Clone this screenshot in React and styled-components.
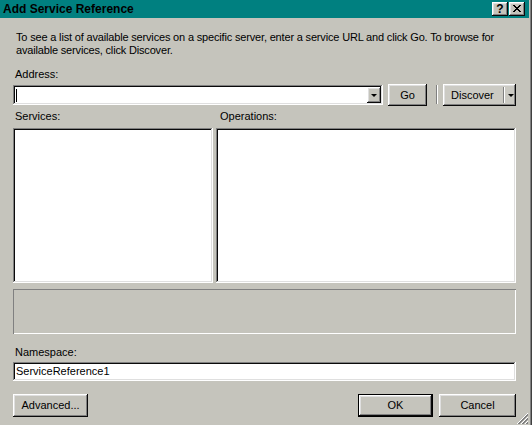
import styled, { createGlobalStyle } from 'styled-components';

const GlobalStyle = createGlobalStyle`
  html, body {
    margin: 0;
    padding: 0;
    background: #c5c4bc;
  }
  body {
    font-family: "Liberation Sans", Arial, sans-serif;
    font-size: 11px;
    color: #000;
  }
`;

const raised = `
  box-shadow: inset -1px -1px #0a0a0a, inset 1px 1px #fff,
    inset -2px -2px #808080, inset 2px 2px #dfdfdf;
`;

const sunken = `
  box-shadow: inset -1px -1px #fff, inset 1px 1px #808080,
    inset -2px -2px #dfdfdf, inset 2px 2px #0a0a0a;
`;

const Window = styled.div`
  position: relative;
  width: 532px;
  height: 425px;
  box-sizing: border-box;
  padding-right: 3px;
  background: #c5c4bc;
  box-shadow: inset -1px 0 #404040, inset -2px 0 #808080;
  display: flex;
  flex-direction: column;
  overflow: hidden;
`;

const TitleBar = styled.div`
  height: 18px;
  background: #008080;
  display: flex;
  align-items: center;
  justify-content: space-between;
  padding: 0 4px 0 3px;
`;

const TitleText = styled.div`
  font-weight: bold;
  font-size: 12px;
`;

const TitleButtons = styled.div`
  display: flex;
  gap: 1px;
`;

const TitleButton = styled.div`
  width: 16px;
  height: 14px;
  box-sizing: border-box;
  background: #c5c4bc;
  ${raised}
  display: flex;
  align-items: center;
  justify-content: center;
  font-weight: bold;
  font-size: 12px;
  line-height: 12px;
  padding-bottom: 1px;
`;

const Content = styled.div`
  display: flex;
  flex-direction: column;
  padding: 13px 13px 0 13px;
`;

const Description = styled.p`
  margin: 0;
  line-height: 13px;
  padding-left: 3px;
  letter-spacing: -0.17px;
`;

const Label = styled.div`
  line-height: 13px;
  padding-left: ${(p) => p.$indent ?? 2}px;
  margin-top: ${(p) => p.$mt ?? 0}px;
`;

const AddressRow = styled.div`
  display: flex;
  align-items: flex-start;
  height: 22px;
  margin-top: 3px;
`;

const Combo = styled.div`
  width: 370px;
  height: 20px;
  margin-top: 1px;
  box-sizing: border-box;
  padding: 2px;
  background: #fff;
  ${sunken}
  display: flex;
  align-items: center;
  justify-content: space-between;
`;

const Caret = styled.span`
  width: 1px;
  height: 13px;
  margin-left: 1px;
  background: #000;
`;

const ComboButton = styled.div`
  width: 14px;
  height: 16px;
  box-sizing: border-box;
  background: #c5c4bc;
  ${raised}
  display: flex;
  align-items: center;
  justify-content: center;
`;

const Arrow = styled.span`
  width: 0;
  height: 0;
  border-left: 3px solid transparent;
  border-right: 3px solid transparent;
  border-top: 3px solid #000;
`;

const Button = styled.div`
  width: ${(p) => p.$w}px;
  height: ${(p) => p.$h ?? 23}px;
  margin-left: ${(p) => p.$ml ?? 0}px;
  box-sizing: border-box;
  background: ${(p) => (p.$light ? '#cbcac3' : '#c5c4bc')};
  border: ${(p) => (p.$default ? '1px solid #000' : 'none')};
  ${raised}
  display: flex;
  align-items: center;
  justify-content: center;
  line-height: 13px;
`;

const SplitButton = styled(Button)`
  justify-content: flex-start;
  padding-left: 8px;
`;

const SplitDivider = styled.span`
  width: 1px;
  height: 16px;
  margin-left: 9px;
  margin-right: 4px;
  background: #808080;
  box-shadow: 1px 0 #fff;
`;

const Separator = styled.div`
  width: 1px;
  height: 19px;
  margin: 1px 1px 0 9px;
  background: #808080;
  box-shadow: 1px 0 #fff;
`;

const Columns = styled.div`
  display: grid;
  grid-template-columns: 200px 1fr;
  column-gap: 3px;
  margin-top: 4px;
`;

const Column = styled.div`
  display: flex;
  flex-direction: column;
`;

const ListBox = styled.div`
  height: 155px;
  margin-top: 5px;
  background: #fff;
  ${sunken}
`;

const StatusBox = styled.div`
  height: 45px;
  margin-top: 6px;
  box-shadow: inset 1px 1px #808080, inset -1px -1px #fff;
`;

const TextField = styled.div`
  height: 19px;
  margin-top: 3px;
  box-sizing: border-box;
  padding: 2px 3px;
  background: #fff;
  ${sunken}
  line-height: 15px;
`;

const ButtonRow = styled.div`
  display: flex;
  align-items: center;
  margin-top: 13px;
`;

const Spacer = styled.div`
  flex: 1;
`;

const Grip = styled.svg`
  position: absolute;
  right: 3px;
  bottom: 0;
`;

export default function App() {
  return (
    <>
      <GlobalStyle />
      <Window>
        <TitleBar>
          <TitleText>Add Service Reference</TitleText>
          <TitleButtons>
            <TitleButton>?</TitleButton>
            <TitleButton>
              <svg width="8" height="7" viewBox="0 0 8 7">
                <path
                  d="M0 0h2v1h1v1h2V1h1V0h2v1H7v1H6v1H5v1h1v1h1v1h1v1H6V6H5V5H3v1H2v1H0V6h1V5h1V4h1V3H2V2H1V1H0z"
                  fill="#000"
                />
              </svg>
            </TitleButton>
          </TitleButtons>
        </TitleBar>
        <Content>
          <Description>
            To see a list of available services on a specific server, enter a service URL and click Go. To browse for
            <br />
            available services, click Discover.
          </Description>
          <Label $mt={11}>Address:</Label>
          <AddressRow>
            <Combo>
              <Caret />
              <ComboButton>
                <Arrow />
              </ComboButton>
            </Combo>
            <Button $w={39} $h={22} $ml={5}>Go</Button>
            <Separator />
            <SplitButton $w={73} $h={22} $ml={5} $light>
              Discover
              <SplitDivider />
              <Arrow />
            </SplitButton>
          </AddressRow>
          <Columns>
            <Column>
              <Label>Services:</Label>
              <ListBox />
            </Column>
            <Column>
              <Label $indent={4}>Operations:</Label>
              <ListBox />
            </Column>
          </Columns>
          <StatusBox />
          <Label $mt={12}>Namespace:</Label>
          <TextField>ServiceReference1</TextField>
          <ButtonRow>
            <Button $w={75}>Advanced...</Button>
            <Spacer />
            <Button $w={75} $default>OK</Button>
            <Button $w={77} $ml={6}>Cancel</Button>
          </ButtonRow>
        </Content>
        <Grip width="12" height="12" viewBox="0 0 12 12">
          <path d="M11 1L1 11M11 5L5 11M11 9L9 11" stroke="#808080" strokeWidth="1" />
          <path d="M11 2L2 11M11 6L6 11M11 10L10 11" stroke="#808080" strokeWidth="1" />
          <path d="M11 0L0 11M11 4L4 11M11 8L8 11" stroke="#fff" strokeWidth="1" />
        </Grip>
      </Window>
    </>
  );
}
